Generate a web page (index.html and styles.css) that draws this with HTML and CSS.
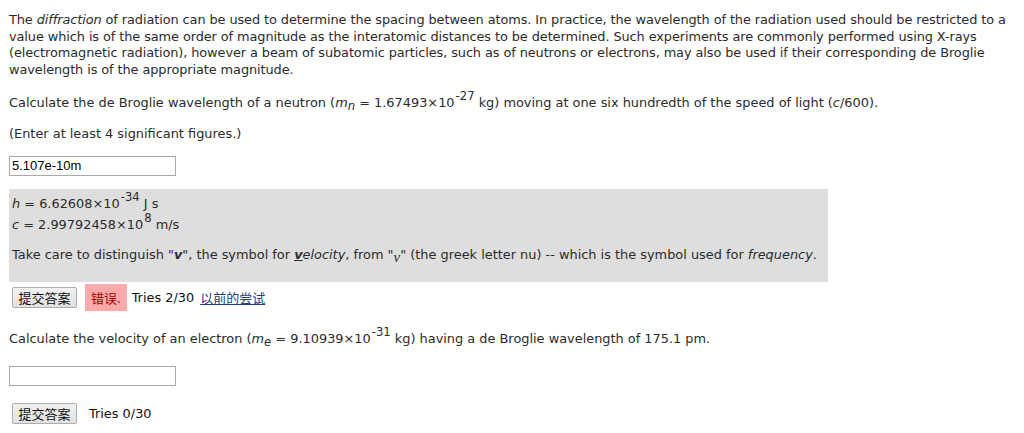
FILE: index.html
```html
<!DOCTYPE html>
<html>
<head>
<meta charset="utf-8">
<link rel="stylesheet" href="styles.css">
</head>
<body>
<div class="page">
  <p class="intro">The <i>diffraction</i> of radiation can be used to determine the spacing between atoms. In practice, the wavelength of the radiation used should be restricted to a value which is of the same order of magnitude as the interatomic distances to be determined. Such experiments are commonly performed using X-rays (electromagnetic radiation), however a beam of subatomic particles, such as of neutrons or electrons, may also be used if their corresponding de Broglie wavelength is of the appropriate magnitude.</p>

  <p class="q1">Calculate the de Broglie wavelength of a neutron (<i>m<sub>n</sub></i> = 1.67493×10<sup>-27</sup> kg) moving at one six hundredth of the speed of light (<i>c</i>/600).</p>

  <p class="hint">(Enter at least 4 significant figures.)</p>

  <div class="answer">5.107e-10m</div>

  <div class="consts">
    <div class="cline"><i>h</i> = 6.62608×10<sup>-34</sup> J s</div>
    <div class="cline"><i>c</i> = 2.99792458×10<sup>8</sup> m/s</div>
    <div class="care">Take care to distinguish "<b><i>v</i></b>", the symbol for <i><b><u>v</u></b>elocity</i>, from "<span class="nu">ν</span>" (the greek letter nu) -- which is the symbol used for <i>frequency</i>.</div>
  </div>

  <div class="submit-row first">
    <button class="btn">提交答案</button>
    <span class="wrong">错误.</span>
    <span class="tries">Tries 2/30</span>
    <a class="prev" href="#">以前的尝试</a>
  </div>

  <p class="q2">Calculate the velocity of an electron (<i>m<sub>e</sub></i> = 9.10939×10<sup>-31</sup> kg) having a de Broglie wavelength of 175.1 pm.</p>

  <div class="answer empty"></div>

  <div class="submit-row second">
    <button class="btn">提交答案</button>
    <span class="tries">Tries 0/30</span>
  </div>
</div>
</body>
</html>
```

FILE: styles.css
```css
html, body {
  margin: 0;
  padding: 0;
  background: #ffffff;
}

.page {
  padding: 12px 4px 0 9px;
  font-family: "DejaVu Sans", Verdana, sans-serif;
  font-size: 12.9px;
  color: #2b2b2b;
}

p {
  margin: 0;
  line-height: 16.5px;
}

sup, sub {
  font-size: 0.9em;
  line-height: 0;
  position: relative;
  vertical-align: baseline;
}
sup { top: -0.6em; margin-left: 1px; }
sub { top: 0.3em; }

.intro {
  margin-bottom: 17px;
  letter-spacing: -0.09px;
}
.hint { margin-top: 14px; }

.answer {
  margin-top: 14px;
  width: 163px;
  height: 18px;
  border: 1px solid #a9a9a9;
  font-family: "Liberation Sans", Arial, sans-serif;
  font-size: 13px;
  line-height: 18px;
  padding-left: 2px;
  color: #000;
  box-sizing: content-box;
}
.answer.empty { margin-top: 19px; }

.consts {
  margin-top: 13px;
  width: 816px;
  background: #dedede;
  padding: 4px 0 18px 3px;
}

.cline {
  line-height: 21px;
}

.care {
  margin-top: 11px;
  line-height: 16.5px;
}

.nu {
  font-family: "Liberation Serif", serif;
  font-style: italic;
  font-size: 15px;
  position: relative;
  top: 3px;
}

.submit-row {
  display: flex;
  align-items: center;
  gap: 4px;
  padding-left: 3px;
}
.submit-row.first { margin-top: 2px; height: 27px; }
.submit-row.second { margin-top: 17px; }

.btn {
  width: 65px;
  height: 21px;
  padding: 0;
  border: 1px solid #adadad;
  border-radius: 2px;
  background: linear-gradient(#f2f2f2, #e1e1e1);
  font-family: "Noto Sans CJK SC", sans-serif;
  font-size: 13px;
  color: #111;
  margin-right: 4px;
}

.wrong {
  background: #ffaaaa;
  height: 27px;
  line-height: 27px;
  padding: 0 6px;
  font-family: "Noto Sans CJK SC", sans-serif;
  font-size: 13px;
  color: #a40000;
}

.tries {
  color: #111;
  margin-left: 1px;
}

.prev {
  color: #223a88;
  font-family: "Noto Sans CJK SC", sans-serif;
  font-size: 13px;
  text-decoration: underline;
  margin-left: 2px;
}

.q2 { margin-top: 20px; }
.submit-row.second .tries { margin-left: 4px; }
```
